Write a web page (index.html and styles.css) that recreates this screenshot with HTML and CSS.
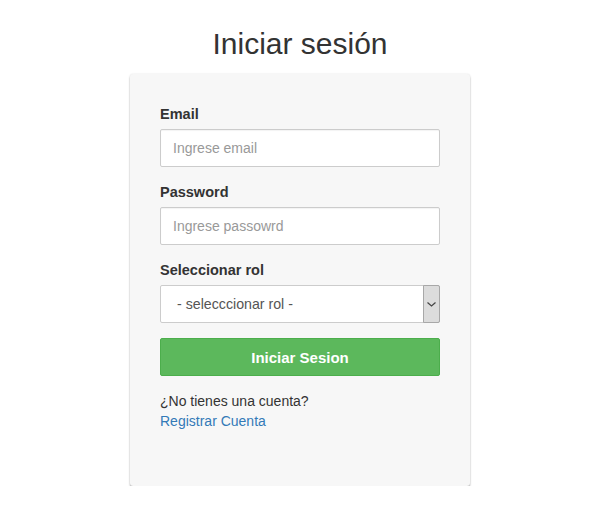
FILE: index.html
```html
<!DOCTYPE html>
<html lang="es">
<head>
<meta charset="utf-8">
<title>Iniciar sesión</title>
<link rel="stylesheet" href="styles.css">
</head>
<body>
<div class="page">
  <h2 class="title">Iniciar sesión</h2>
  <div class="card">
    <form class="form">
      <div class="group">
        <label class="label" for="email">Email</label>
        <input class="control" id="email" type="text" placeholder="Ingrese email">
      </div>
      <div class="group">
        <label class="label" for="pass">Password</label>
        <input class="control" id="pass" type="password" placeholder="Ingrese passowrd">
      </div>
      <div class="group">
        <label class="label">Seleccionar rol</label>
        <div class="select">
          <span class="select-text">- selecccionar rol -</span>
          <span class="select-btn">
            <svg width="9" height="5" viewBox="0 0 9 5"><path d="M0.5 0.5 L4.5 4 L8.5 0.5" fill="none" stroke="#444" stroke-width="1.2"/></svg>
          </span>
        </div>
      </div>
      <button class="btn" type="button">Iniciar Sesion</button>
      <p class="note">¿No tienes una cuenta?<br><a class="link" href="#">Registrar Cuenta</a></p>
    </form>
  </div>
</div>
</body>
</html>
```
FILE: styles.css
```css
* { box-sizing: border-box; }
html, body { margin: 0; padding: 0; background: #fff; }
body {
  font-family: "Liberation Sans", Arial, sans-serif;
  font-size: 14px;
  line-height: 20px;
  color: #333;
}
.page { padding-left: 5px; }
.title {
  margin: 27px 0 14px;
  text-align: center;
  font-size: 30px;
  line-height: 33px;
  font-weight: 500;
  color: #333;
}
.card {
  width: 340px;
  margin: 0 auto;
  padding: 30px 30px 55px;
  background: #f7f7f7;
  border-radius: 3px;
  box-shadow: 0 2px 2px rgba(0,0,0,0.28), 0 0 2px rgba(0,0,0,0.12);
}
.form { display: flex; flex-direction: column; }
.group { display: flex; flex-direction: column; margin-bottom: 15px; }
.label {
  display: block;
  font-weight: bold;
  font-size: 14.5px;
  line-height: 20px;
  margin-bottom: 5px;
  color: #333;
}
.control {
  height: 38px;
  width: 100%;
  padding: 6px 12px;
  font-family: inherit;
  font-size: 14px;
  color: #555;
  background: #fff;
  border: 1px solid #ccc;
  border-radius: 2px;
  box-shadow: inset 0 1px 1px rgba(0,0,0,0.05);
  outline: none;
}
.control::placeholder { color: #999; }
.select {
  height: 38px;
  display: flex;
  align-items: stretch;
  background: #fff;
  border: 1px solid #ccc;
  border-radius: 2px;
}
.select-text {
  flex: 1;
  display: flex;
  align-items: center;
  padding-left: 16px;
  font-size: 14.2px;
  color: #555;
}
.select-btn {
  width: 17px;
  display: flex;
  align-items: center;
  justify-content: center;
  background: #dcdcdc;
  border: 1px solid #a8a8a8;
  margin: -1px -1px -1px 0;
  border-radius: 0 2px 2px 0;
}
.btn {
  height: 38px;
  width: 100%;
  background: #5cb85c;
  border: 1px solid #4cae4c;
  border-radius: 2px;
  color: #fff;
  font-family: inherit;
  font-weight: bold;
  font-size: 15px;
  padding: 0;
}
.note { margin: 15px 0 0; }
.link { color: #337ab7; text-decoration: none; }
```
